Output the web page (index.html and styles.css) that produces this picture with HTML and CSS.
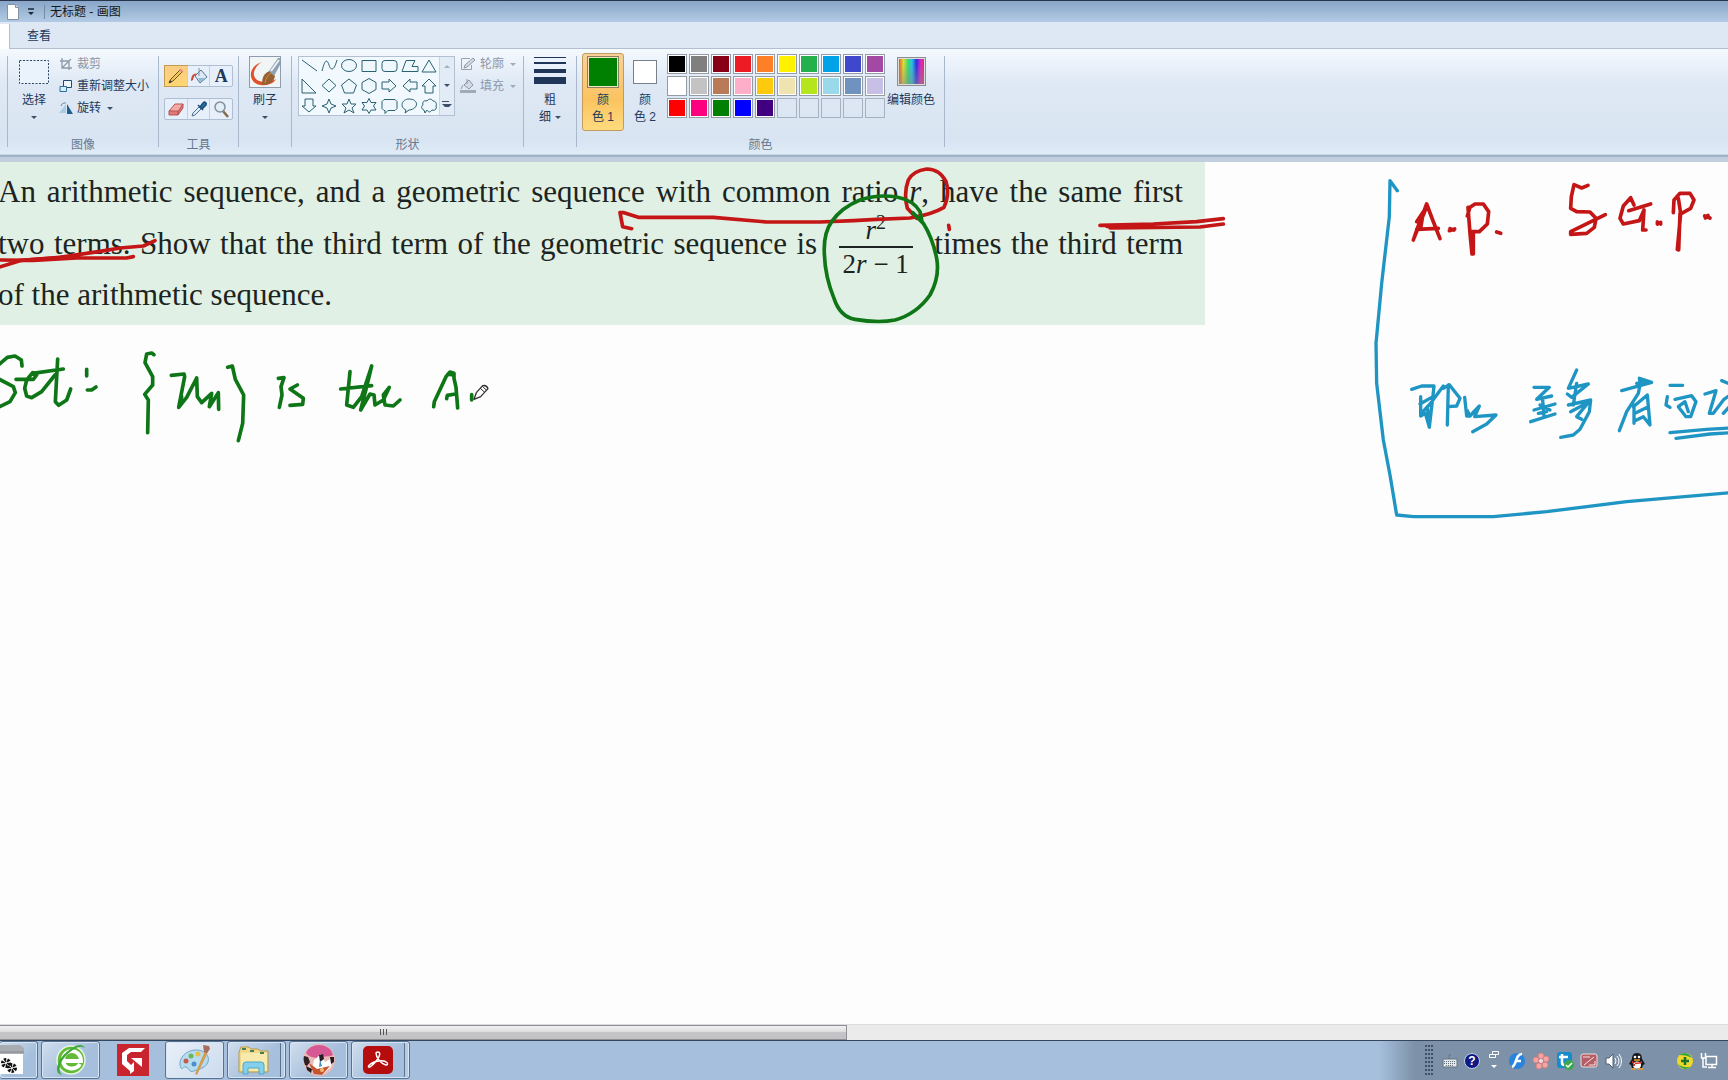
FILE: index.html
```
<!DOCTYPE html>
<html lang="zh-CN">
<head>
  <meta charset="UTF-8" />
  <meta name="viewport" content="width=device-width, initial-scale=1.0"/>
  <title>无标题 - 画图</title>
  <link rel="stylesheet" href="styles.css">
</head>
<body>

<header class="titlebar">
  <svg class="doc" width="12" height="16" viewBox="0 0 12 16"><path d="M.5.5h8l3 3v12H.5z" fill="#fff" stroke="#8492a6"/><path d="M8.500.5v3h3" fill="#dde4ec" stroke="#8492a6"/></svg>
  <svg class="quick" width="8" height="8" viewBox="0 0 8 8"><path d="M1 1h6" stroke="#1c2838" stroke-width="1.500"/><path d="M1 4h6L4 7z" fill="#1c2838"/></svg>
  <h1>无标题 - 画图</h1>
</header>

<nav class="tabs">
  <span class="tab-active"></span>
  <button class="tab">查看</button>
</nav>

<!-- Ribbon -->
<section class="ribbon">
  <div class="group edge"></div>

  <div class="group g-image">
    <div class="row">
      <button class="big">
        <svg width="32" height="32" viewBox="0 0 32 32"><rect x="1.500" y="4.500" width="29" height="23" fill="#eaf2fb" stroke="#2d4668" stroke-dasharray="2 1.500"/></svg>
        <span>选择</span>
        <i class="arrow"></i>
      </button>
      <div class="stack">
        <button class="line off"><svg width="14" height="14" viewBox="0 0 14 14"><path d="M3 1v10h10M1 4h9v9M3 11l9-9" fill="none" stroke="#9099a8" stroke-width="1.300"/></svg>裁剪</button>
        <button class="line"><svg width="14" height="14" viewBox="0 0 14 14"><path d="M4.500 1.500h8v7h-8z" fill="#eef6fd" stroke="#23466b"/><path d="M1 7.500h6.500v5H1z" fill="#d6ecf8" stroke="#2e6f96"/></svg>重新调整大小</button>
        <button class="line"><svg width="14" height="14" viewBox="0 0 14 14"><path d="M7 12V3L0 12z" fill="#a9cbe4"/><path d="M8 3v10h6z" fill="#1f5f8e"/><path d="M2 5c1-3 3-3 5-3" stroke="#4d86b4" fill="none"/></svg>旋转<i class="arrow"></i></button>
      </div>
    </div>
    <h2>图像</h2>
  </div>

  <div class="group g-tools">
    <div class="toolset">
      <button class="tool on" aria-label="铅笔"><svg width="18" height="18" viewBox="0 0 18 18"><path d="M2 16l2-4L13 3l2 2-9 9z" fill="#f3c84e" stroke="#705226"/><path d="M2 16l1-3 2 2z" fill="#333"/><path d="M12 3l3 3 1.500-1.500-3-3z" fill="#e58a7c"/></svg></button>
      <button class="tool" aria-label="填充"><svg width="18" height="18" viewBox="0 0 18 18"><path d="M5 9l6-6 6 7-7 6z" fill="#dceaf5" stroke="#58728c"/><path d="M9 1v8" stroke="#7890a6"/><path d="M1 14c0-6 3-9 7-7-3 0-4 2-5 6z" fill="#d0483c"/><path d="M8 11h8l-6 4z" fill="#8fbcdd"/></svg></button>
      <button class="tool letter" aria-label="文本">A</button>
    </div>
    <div class="toolset">
      <button class="tool" aria-label="橡皮擦"><svg width="18" height="18" viewBox="0 0 18 18"><path d="M2 11l6-7h8l-5 8z" fill="#f4a9a7" stroke="#b55656"/><path d="M2 11h9v4H2zM11 12l5-8v4l-5 7z" fill="#e07a78" stroke="#b55656"/></svg></button>
      <button class="tool" aria-label="取色器"><svg width="18" height="18" viewBox="0 0 18 18"><path d="M2 16l1-3 6-6 2 2-6 6z" fill="#dcebf7" stroke="#54728e"/><path d="M8 5l5 5M10 7l3-4c2-2 4 0 3 2l-4 4z" fill="#2370a8" stroke="#1d4d7a" stroke-width="1.500"/></svg></button>
      <button class="tool" aria-label="放大镜"><svg width="18" height="18" viewBox="0 0 18 18"><path d="M11 11l5 6" stroke="#86684a" stroke-width="2.500"/><circle cx="8" cy="7" r="5" fill="#e2edf7" stroke="#828f9c" stroke-width="1.500"/></svg></button>
    </div>
    <h2>工具</h2>
  </div>

  <div class="group g-brush">
    <button class="big">
      <svg width="32" height="32" viewBox="0 0 32 32"><rect x=".5" y=".5" width="31" height="31" fill="#f2f5f6" stroke="#8e9dad"/><path d="M13 6C3 9-1 18 4 25c4 5 11 5 17 3 3-1 5-3 6-5-5 3-9 4-13 3-7-1-10-5-9-10 1-4 4-8 8-10z" fill="#e0502a"/><path d="M13 29c0-8 2-12 8-14l5 5c-1 6-6 9-13 9z" fill="#96602f"/><path d="M20 15L29 2h2v7l-6 11z" fill="#8ea0b2"/><path d="M22 15l8-11" stroke="#e9eff4" stroke-width="2"/><path d="M16 27c1-5 3-8 6-10" stroke="#c79154" fill="none"/></svg>
      <span>刷子</span>
      <i class="arrow"></i>
    </button>
  </div>

  <div class="group g-shapes">
    <div class="row">
      <div class="gallery">
        <div class="shapes">
          <button aria-label="直线"><svg viewBox="0 0 20 20"><path d="M3 4l15 11"/></svg></button>
          <button aria-label="曲线"><svg viewBox="0 0 20 20"><path d="M3 15C6 3 8 3 10 9s5 6 8-5"/></svg></button>
          <button aria-label="椭圆"><svg viewBox="0 0 20 20"><ellipse cx="10" cy="9.500" rx="7.500" ry="6"/></svg></button>
          <button aria-label="矩形"><svg viewBox="0 0 20 20"><path d="M3 4.500h14v11H3z"/></svg></button>
          <button aria-label="圆角矩形"><svg viewBox="0 0 20 20"><rect x="3" y="4.500" width="15" height="11" rx="3"/></svg></button>
          <button aria-label="多边形"><svg viewBox="0 0 20 20"><path d="M7 4.500h9l-3 6h6v5H3z"/></svg></button>
          <button aria-label="三角形"><svg viewBox="0 0 20 20"><path d="M10 4l7 12H3z"/></svg></button>
          <button aria-label="直角三角形"><svg viewBox="0 0 20 20"><path d="M3 3l14 14H3z"/></svg></button>
          <button aria-label="菱形"><svg viewBox="0 0 20 20"><path d="M10 3l7 6.500-7 6.500-7-6.500z"/></svg></button>
          <button aria-label="五边形"><svg viewBox="0 0 20 20"><path d="M10 3l7.500 6-3 8h-9l-3-8z"/></svg></button>
          <button aria-label="六边形"><svg viewBox="0 0 20 20"><path d="M10 2.500l7 4v7l-7 4-7-4v-7z"/></svg></button>
          <button aria-label="右箭头"><svg viewBox="0 0 20 20"><path d="M3 6h7V3l7 7-7 6v-3H3z"/></svg></button>
          <button aria-label="左箭头"><svg viewBox="0 0 20 20"><path d="M18 6h-7V3l-7 7 7 6v-3h7z"/></svg></button>
          <button aria-label="上箭头"><svg viewBox="0 0 20 20"><path d="M6 17v-7H3l7-7 7 7h-3v7z"/></svg></button>
          <button aria-label="下箭头"><svg viewBox="0 0 20 20"><path d="M6 3v7H3l7 6 7-6h-3V3z"/></svg></button>
          <button aria-label="四角星"><svg viewBox="0 0 20 20"><path d="M10 3l2 5 5 2-5 2-2 5-2-5-5-2 5-2z"/></svg></button>
          <button aria-label="五角星"><svg viewBox="0 0 20 20"><path d="M10 3l2 5h5l-4 4 2 5-5-3-5 3 2-5-4-4h5z"/></svg></button>
          <button aria-label="六角星"><svg viewBox="0 0 20 20"><path d="M10 2.500l2 4h5l-2.500 3.500 2.500 4h-5l-2 3.500L8 14H3l2.500-4L3 6.500h5z"/></svg></button>
          <button aria-label="圆角矩形标注"><svg viewBox="0 0 20 20"><path d="M5 3.500h11l2 2v7l-2 2h-7l-3 3v-3H5l-2-2v-7z"/></svg></button>
          <button aria-label="椭圆形标注"><svg viewBox="0 0 20 20"><path d="M7 14c-7-3-4-11 3-11 10 0 10 10 0 11l-4 3z"/></svg></button>
          <button aria-label="云形标注"><svg viewBox="0 0 20 20"><path d="M5 14c-3-1-3-4-1-5-1-3 1-5 4-4 2-3 5-2 6 0 3 0 4 3 3 5 1 3-1 5-4 4-2 3-4 2-5 0l-2 3z"/></svg></button>
        </div>
        <div class="shape-scroll">
          <button aria-label="上一行"><i class="arrow up"></i></button>
          <button aria-label="下一行"><i class="arrow"></i></button>
          <button class="more" aria-label="其他"><i class="arrow"></i></button>
        </div>
      </div>
      <div class="stack">
        <button class="line off"><svg width="16" height="14" viewBox="0 0 16 14"><path d="M10 1.500H1.500v11h10V8" stroke="#98a2b0" fill="none"/><path d="M4 11l1-3 8-7 2 2-8 7z" fill="#d4dae3" stroke="#8d97a5"/></svg>轮廓<i class="arrow"></i></button>
        <button class="line off"><svg width="16" height="14" viewBox="0 0 16 14"><path d="M4 6l5-5 4 5-4 4z" fill="#d4dae3" stroke="#8d97a5"/><path d="M7 0v5M3 6L1 10" stroke="#8d97a5"/><path d="M0 11h16v3H0z" fill="#9fa9b7"/></svg>填充<i class="arrow"></i></button>
      </div>
    </div>
    <h2>形状</h2>
  </div>

  <div class="group g-size">
    <button class="big">
      <svg width="32" height="32" viewBox="0 0 32 32"><path fill="#1f3658" d="M0 1h32v1H0zM0 6h32v2H0zM0 13h32v4H0zM0 21h32v7H0z"/></svg>
      <span>粗</span>
      <span class="with-arrow">细<i class="arrow"></i></span>
    </button>
  </div>

  <div class="group g-colors">
    <div class="row">
      <button class="big color on"><span class="well green"></span><span>颜</span><span>色 1</span></button>
      <button class="big color"><span class="well small white"></span><span>颜</span><span>色 2</span></button>
      <div class="palette">
        <button class="black" aria-label="黑色"></button>
        <button class="gray" aria-label="灰色"></button>
        <button class="maroon" aria-label="深红色"></button>
        <button class="red" aria-label="红色"></button>
        <button class="orange" aria-label="橙色"></button>
        <button class="yellow" aria-label="黄色"></button>
        <button class="leaf" aria-label="绿色"></button>
        <button class="azure" aria-label="青绿"></button>
        <button class="indigo" aria-label="靛蓝"></button>
        <button class="purple" aria-label="紫色"></button>
        <button class="white" aria-label="白色"></button>
        <button class="silver" aria-label="浅灰"></button>
        <button class="brown" aria-label="褐色"></button>
        <button class="rose" aria-label="玫瑰色"></button>
        <button class="gold" aria-label="金色"></button>
        <button class="cream" aria-label="浅黄色"></button>
        <button class="lime" aria-label="酸橙色"></button>
        <button class="sky" aria-label="淡青绿"></button>
        <button class="steel" aria-label="蓝灰"></button>
        <button class="lavender" aria-label="淡紫色"></button>
        <button class="pure-red" aria-label="自定义 1"></button>
        <button class="pink" aria-label="自定义 2"></button>
        <button class="green" aria-label="自定义 3"></button>
        <button class="blue" aria-label="自定义 4"></button>
        <button class="violet" aria-label="自定义 5"></button>
        <button class="empty" aria-label="自定义 6"></button>
        <button class="empty" aria-label="自定义 7"></button>
        <button class="empty" aria-label="自定义 8"></button>
        <button class="empty" aria-label="自定义 9"></button>
        <button class="empty" aria-label="自定义 10"></button>
      </div>
      <button class="big edit"><span class="rainbow"></span><span>编辑颜色</span></button>
    </div>
    <h2>颜色</h2>
  </div>
</section>

<!-- Drawing area -->
<main class="canvas">
  <div class="problem">
    <p>An arithmetic sequence, and a geometric sequence with common ratio <em>r</em>, have the same first<br>
    two terms. Show that the third term of the geometric sequence is <span class="frac"><span class="num"><em>r</em><sup>2</sup></span><span class="den">2<em>r</em> − 1</span></span> times the third term</p>
    <p class="last">of the arithmetic sequence.</p>
  </div>

  <svg class="ink" width="1728" height="862" viewBox="0 162 1728 862">
    <!-- left notes -->
    <svg x="0" y="150" width="450" height="300" viewBox="0 0 1350 900">
      <g class="red-ink">
        <path d="M-5 330L100 331 230 324 380 324 400 320M-5 352L60 332 180 322 300 304 360 294 430 288 465 272"/>
        <path d="M60 331L140 326 235 318"/>
      </g>
      <g class="green-ink">
        <path d="M66 648L64 630 45 618 22 622-5 645M-5 686L40 710 46 728 30 755-5 772"/>
        <path d="M48 688L100 688 110 675 98 668 80 690 74 715 80 738 95 743 125 725 165 675"/>
        <path d="M98 670L190 657M173 627L166 755 176 766 200 750 212 717M260 658V678M262 720L275 720 288 711"/>
        <path d="M462 614L455 609 440 612 435 638 458 680 458 705 434 733 445 750 443 848"/>
        <path d="M514 676L552 672 554 680 536 772 560 742 590 684 592 740 605 758 635 730 628 770 655 728 656 778M545 740L540 765"/>
        <path d="M683 652L697 648 706 688 731 735 728 820 715 872"/>
        <path d="M835 685L852 683 843 710 846 735 838 772M892 705L870 717 910 745 908 763 870 766"/>
        <path d="M1022 717L1115 707M1050 665L1040 765 1060 772 1085 740 1115 648 1100 710 1082 780 1110 732 1122 735 1125 765 1150 750 1168 712 1150 735 1155 765 1180 768 1200 750"/>
      </g>
    </svg>
    <svg x="420" y="350" width="90" height="80" viewBox="0 0 270 240">
      <path class="green-ink" d="M41 170L43 155 78 80 90 66 102 70 102 85 108 112 113 174M106 132L82 136 80 146M84 72L102 76M155 134V150"/>
      <path d="M162 148L169 128 188 107Q200 104 204 116L182 140Z" fill="#fff" stroke="#333" stroke-width="4"/>
      <path d="M181 115L194 127M187 109L200 121" stroke="#333" stroke-width="3"/>
    </svg>
    <!-- marks on the question -->
    <svg x="440" y="150" width="810" height="190" viewBox="0 0 2430 570">
      <path class="red-ink" d="M575 236L548 230 540 188 552 188 595 202 820 202 980 216 1140 216 1240 212 1310 208 1410 204Q1475 194 1512 172Q1530 130 1518 95Q1500 58 1460 57Q1420 62 1405 90Q1390 130 1402 175L1430 205M1526 226L1528 238M1980 226L2140 222 2270 215 2350 206M2010 234L2280 231 2350 222M2000 229L2140 228"/>
      <path class="green-ink" d="M1446 215L1440 185Q1420 150 1370 141Q1315 132 1260 150Q1205 172 1175 215Q1150 250 1153 310Q1155 380 1182 445Q1200 500 1245 508Q1315 520 1365 510Q1430 492 1470 435Q1500 380 1490 325Q1478 265 1450 220L1418 188"/>
    </svg>
    <!-- right notes -->
    <svg x="1360" y="150" width="368" height="380" viewBox="0 0 1104 1140">
      <path class="blue-ink" d="M112 122L90 92 88 200 65 400 48 580 50 700 70 870 90 975 110 1095 160 1100 400 1100 560 1085 800 1055 1110 1028"/>
      <g class="red-ink">
        <path d="M160 270L172 235 200 162 218 210 240 266M170 238L235 235M170 215L190 185 182 235M163 262L198 175M268 242L284 237M270 236L282 240"/>
        <path d="M324 172L330 250 336 312M322 198L330 172 345 162 370 162 386 185 382 222 358 245 330 245M340 250V312M410 246L422 250"/>
        <path d="M684 106L665 114 642 104 634 140 632 175 650 185 690 186 708 205 703 232 680 250 632 253 632 245 736 194"/>
        <path d="M822 165L812 143 790 168 780 205 790 222 838 212 852 180 848 240 858 240M806 182L872 162M892 216L902 222M892 222L902 217"/>
        <path d="M955 145L962 190 952 298M960 190L956 300M940 188L942 150 960 130 990 130 1002 150 992 175 965 190M1034 198L1050 204M1036 204L1044 196"/>
      </g>
      <g class="blue-ink">
        <path d="M155 718L185 708 222 708 218 745 208 832 196 790 182 798 182 740M180 762L215 742M184 790L210 762 250 708M202 770L208 820M265 705L262 825M250 715L268 704 300 745 290 768 265 770"/>
        <path d="M314 742L320 798 330 798 358 768 344 800 408 795 380 822 338 845M322 782L330 798"/>
        <path d="M522 712H568L530 748 575 738M548 750L552 798M522 780L585 762M512 815L585 792M535 790L560 785M540 765L570 780"/>
        <path d="M650 660L625 715 685 702 635 742 622 732M625 765L692 750 688 785 660 838 640 855 602 862M632 785L685 757 650 800 665 808M650 700L640 765"/>
        <path d="M785 722L875 697 838 685 842 705M842 695L835 730 800 785 778 842M822 765L822 820M820 770L862 735 870 825 850 800 825 812M825 790L865 770M830 700L855 695"/>
        <path d="M930 706H968M922 740L918 765 930 772M945 748L995 737 1008 755 992 800 978 800 955 770 975 755 985 785"/>
        <path d="M1035 732L1068 722 1048 790 1060 790 1092 748 1110 735M1085 692L1110 702M1090 790L1108 770M930 848L1040 838 1110 834M948 865L1050 852 1110 848"/>
      </g>
    </svg>
  </svg>
</main>

<div class="scrollbar"><div class="thumb"><i class="grip"></i></div></div>

<!-- Taskbar -->
<footer class="taskbar">
  <button class="task first" aria-label="设置"><svg width="26" height="34" viewBox="0 0 26 34"><path d="M0 4h23v27H0z" fill="#fff"/><path d="M0 2h20l4 3v6H0z" fill="#a9adb1"/><path d="M0 9h24" stroke="#85898e"/><circle cx="6" cy="20" r="3" fill="#fff" stroke="#111" stroke-width="4" stroke-dasharray="2 1"/><circle cx="12" cy="25" r="3" fill="#fff" stroke="#111" stroke-width="4" stroke-dasharray="2 1"/></svg></button>
  <button class="task" aria-label="浏览器"><svg width="34" height="34" viewBox="0 0 34 34"><circle cx="17" cy="17" r="14" fill="#62ba37" stroke="#e6f4df" stroke-width="1.500"/><path d="M9 18h18c0-13-18-13-18-1 0 10 13 11 17 4" fill="none" stroke="#fff" stroke-width="4"/><path d="M8 32C-2 31 4 13 18 5c6-4 11-4 13 0-5-3-10 0-15 4C6 17 3 27 8 32z" fill="#3da838"/></svg></button>
  <button class="task plain" aria-label="录屏"><svg width="32" height="32" viewBox="0 0 32 32"><path d="M0 0h32v32H0z" fill="#c8252f"/><path d="M28 4H12L5 9v11l8 7v3l4-3V18l-3 3-4-4v-6l4-3h10z" fill="#fff"/><path d="M14 14h11v9z" fill="#fff"/></svg></button>
  <button class="task active" aria-label="画图"><svg width="34" height="34" viewBox="0 0 34 34"><path d="M3 25C-1 17 7 7 18 7c9 0 14 6 12 12s-9 7-14 9-5-3-8-4-3 3-5 1z" fill="#b8dcef" stroke="#70a6c5"/><circle cx="8" cy="18" r="2.500" fill="#c65a4c"/><circle cx="13" cy="13" r="2.500" fill="#6fb65b"/><circle cx="20" cy="11" r="2.500" fill="#e9bd48"/><circle cx="16" cy="21" r="2.500" fill="#4c8dce"/><path d="M17 31L27 8l3 1-11 23z" fill="#d39b4e"/><path d="M26 9l-1-7 6 1 1 3-3 4z" fill="#a76d5d"/></svg></button>
  <button class="task stacked" aria-label="文件夹"><svg width="34" height="34" viewBox="0 0 34 34"><path d="M2 9l2-5h8l2 2h7l2 2h8v21H2z" fill="#f0d989" stroke="#b99a48"/><path d="M4 10h26v18H4z" fill="#f8eaad"/><path d="M5 6h4M13 8h4M23 10h4" stroke="#437c55" stroke-width="2"/><path d="M6 31V22q0-3 3-3h15q3 0 3 3v9h-5v-6H11v6z" fill="#84cfe9" stroke="#4ba8ca"/></svg></button>
  <button class="task" aria-label="头像"><svg width="34" height="34" viewBox="0 0 34 34"><circle cx="17" cy="17" r="16" fill="#eab9b8"/><path d="M4 10C8-1 28-1 31 12c-5 3-10-1-14 5C13 13 8 16 4 10z" fill="#d65894"/><path d="M2 13l4 1 2 5-3 4-2-1c-1-3-2-6-1-9z" fill="#2c2022"/><path d="M12 17l7-6 4 8 7-4-1 9-9 8-10-4z" fill="#fff"/><path d="M17 12l4-1 1 5-4 3zM28 14h4v5l-3 2zM4 23l6 3-1 4-4-3z" fill="#251c24"/><path d="M7 20l8 6 13-3-8 9-8-1z" fill="#c45531"/><path d="M18 17l2 6-3 1z" fill="#3f8ec4"/><circle cx="20" cy="27" r="2" fill="#f1bd75"/></svg></button>
  <button class="task stacked" aria-label="PDF"><svg width="30" height="28" viewBox="0 0 30 28"><rect width="30" height="28" rx="5" fill="#b50d0d"/><path d="M15 6c4 0 1 8-8 15-4 1 0-5 9-6 9-1 10 4 7 4-5-1-10-8-10-12q0-1 2-1z" fill="none" stroke="#fff" stroke-width="1.500"/></svg></button>

  <div class="tray">
    <i class="dots"></i>
    <span class="cell"><svg width="16" height="14" viewBox="0 0 16 14"><path d="M7 5V1h2" stroke="#677789" fill="none"/><path d="M1 5h14v8H1z" fill="#e5e8e9" stroke="#65727f"/><path d="M2 7.500h12M2 9.500h12M4 11.500h8" stroke="#65727f" stroke-dasharray="1 1"/></svg></span>
    <span class="cell help">?</span>
    <span class="cell"><svg width="10" height="20" viewBox="0 0 10 20"><path d="M3.500.5h6v3h-6zM.5 3.500h6v3h-6z" fill="#7d92a9" stroke="#fff"/><path d="M2 14h6l-3 3z" fill="#fff"/></svg></span>
    <span class="cell w"><svg width="18" height="18" viewBox="0 0 18 18"><circle cx="9" cy="9" r="8" fill="#2783dc"/><path d="M14 2c-7 0-5 11-10 13M7 9h6" stroke="#fff" stroke-width="2.500" fill="none"/></svg></span>
    <span class="cell w"><svg width="18" height="18" viewBox="0 0 18 18"><g fill="#f2a6a4" stroke="#d67f80"><circle cx="9" cy="4" r="3"/><circle cx="14" cy="7" r="3"/><circle cx="13" cy="13" r="3"/><circle cx="7" cy="14" r="3"/><circle cx="4" cy="8" r="3"/></g><circle cx="9" cy="9" r="2" fill="#f6dcdc"/></svg></span>
    <span class="cell w"><svg width="18" height="18" viewBox="0 0 18 18"><rect width="15" height="16" x="1" rx="3" fill="#168cce"/><path d="M6 2v9q0 2 3 2M3 5h9" stroke="#fff" stroke-width="2.500" fill="none"/><circle cx="13" cy="13" r="5" fill="#3ba949"/><path d="M10 13l2 2 4-4" stroke="#fff" stroke-width="1.500" fill="none"/></svg></span>
    <span class="cell w"><svg width="18" height="16" viewBox="0 0 18 16"><rect x="1" y="1" width="16" height="13" rx="2" fill="#b65e65" stroke="#f0dddd"/><path d="M4 12l10-8M3 4h7M9 12h6V8" stroke="#f4e4e4" fill="none"/></svg></span>
    <span class="cell w"><svg width="18" height="18" viewBox="0 0 18 18"><path d="M2 6h3l4-4v14l-4-4H2z" fill="#fff" stroke="#50606f"/><path d="M11 6q2 3 0 6M13 4q4 5 0 10M15 2q5 7 0 14" stroke="#fff" fill="none"/></svg></span>
    <span class="cell w"><svg width="18" height="18" viewBox="0 0 18 18"><path d="M9 1c-4 0-5 3-5 6l-3 5 2 1 1 3h10l1-3 2-1-3-5c0-3-1-6-5-6z" fill="#17181b"/><ellipse cx="9" cy="13" rx="4" ry="3.500" fill="#fff"/><path d="M4 9q5 3 10 0v2q-5 2-10 0zM5 10v4h2v-3z" fill="#df342c"/><circle cx="7" cy="5" r="1.300" fill="#fff"/><circle cx="11" cy="5" r="1.300" fill="#fff"/><path d="M6 8h6M3 17h5M10 17h5" stroke="#f19b25" stroke-width="1.500"/></svg></span>
    <span class="cell w"></span>
    <span class="cell w"><svg width="18" height="18" viewBox="0 0 18 18"><circle cx="9" cy="9" r="8" fill="#eed92b"/><path d="M3 3q8-5 13 3-5-3-13-3zM15 15q-8 5-13-3 5 4 13 3z" fill="#36a643"/><path d="M9 5v8M5 9h8" stroke="#17722d" stroke-width="2.500"/></svg></span>
    <span class="cell w"><svg width="18" height="18" viewBox="0 0 18 18"><path d="M6 4.500h10.500v8H6zM8 15.500h8M12 13v2M3 6v9h4M1.500 1v5h4V1" fill="none" stroke="#fff" stroke-width="1.500"/></svg></span>
  </div>
</footer>

</body>
</html>
```

FILE: styles.css
```
* {
  box-sizing: border-box;
}

body {
  margin: 0;
  height: 100vh;
  display: flex;
  flex-direction: column;
  overflow: hidden;
  font-family: "Liberation Sans", "Noto Sans CJK SC", sans-serif;
  font-size: 12px;
  line-height: 16px;
  color: #1e395b;
  background: #fdfdfd;
}

button {
  font: inherit;
  color: inherit;
  padding: 0;
  margin: 0;
  border: 0;
  background: none;
}

h1, h2 {
  margin: 0;
  font-size: 12px;
  font-weight: normal;
}

svg {
  display: block;
  flex: none;
}

/* title bar and tabs */
.titlebar {
  height: 22px;
  display: flex;
  align-items: center;
  padding-left: 7px;
  border-top: 1px solid #27364c;
  background: linear-gradient(#89a6c8, #b2cae4);
}

.titlebar h1 {
  margin-left: 9px;
  padding-left: 5px;
  border-left: 1px solid #7289a5;
  line-height: 14px;
  color: #101820;
}

.quick {
  margin-left: 8px;
}

.tabs {
  height: 27px;
  display: flex;
  background: #dde8f4;
  border-bottom: 1px solid #b3bfce;
}

.tab-active {
  width: 10px;
  margin: 2px 0 -1px;
  background: #fff;
  border-right: 1px solid #b3bfce;
}

.tab {
  padding: 2px 17px 0;
}

/* ribbon */
.ribbon {
  height: 113px;
  flex: none;
  display: flex;
  padding-top: 7px;
  background: linear-gradient(#f4f9fe, #dfe9f5 30%, #d8e4f1 80%, #dfebf7 93%, #9db0c6 94%, #9db0c6 95%, #c1cedd 96%);
}

.group {
  height: 91px;
  display: flex;
  flex-direction: column;
  border-right: 1px solid #a9b8ca;
}

.group h2 {
  margin: auto 0 -7px;
  line-height: 18px;
  text-align: center;
  color: #66788f;
}

.edge { width: 8px; }
.g-image { width: 151px; }
.g-tools { width: 80px; }
.g-brush { width: 53px; align-items: center; }
.g-shapes { width: 232px; }
.g-size { width: 53px; align-items: center; }
.g-colors { width: 368px; }

.row {
  display: flex;
  padding-left: 5px;
}

.big {
  display: flex;
  flex-direction: column;
  align-items: center;
}

.big span {
  line-height: 17px;
}

.big svg {
  margin-bottom: 4px;
}

.arrow {
  display: inline-block;
  border: 3px solid transparent;
  border-top-color: #3d4f68;
  border-bottom: 0;
}

.big > .arrow {
  margin-top: 7px;
}

.with-arrow {
  display: flex;
  align-items: center;
  gap: 4px;
}

.arrow.up {
  border-bottom: 3px solid #a6b1c0;
  border-top: 0;
}

.stack {
  display: flex;
  flex-direction: column;
  gap: 6px;
}

.g-image .row {
  padding-left: 10px;
  gap: 9px;
}

.line {
  height: 16px;
  display: flex;
  align-items: center;
  gap: 4px;
  white-space: nowrap;
}

.line .arrow {
  margin-left: 2px;
}

.off {
  color: #8d98a8;
}

.off .arrow {
  border-top-color: #a1abb9;
}

.toolset {
  display: flex;
  width: 69px;
  height: 22px;
  margin: 9px auto 0;
  border: 1px solid #afbfd3;
  border-radius: 2px;
  background: #e7f0fa;
}

.toolset + .toolset {
  margin-top: 11px;
}

.tool {
  flex: 1;
  display: flex;
  align-items: center;
  justify-content: center;
}

.tool + .tool {
  border-left: 1px solid #c3d0e0;
}

.tool.on {
  background: linear-gradient(#f9cd83, #ffd673);
  outline: 1px solid #c49b54;
}

.letter {
  font-family: "Liberation Serif", serif;
  font-size: 18px;
  font-weight: bold;
}

.gallery {
  height: 60px;
  display: flex;
  border: 1px solid #b2c0d1;
  background: #f1f8fe;
  margin: 0 5px 0 1px;
}

.shapes {
  display: grid;
  grid-template-columns: repeat(7, 20px);
  grid-auto-rows: 20px;
  margin-top: -1px;
}

.shapes svg {
  width: 20px;
  height: 20px;
  fill: #edf7fc;
  stroke: #2c6170;
}

.shapes button:first-child svg,
.shapes button:nth-child(2) svg {
  fill: none;
}

.shape-scroll {
  width: 15px;
  display: flex;
  flex-direction: column;
  border-left: 1px solid #c9d4e2;
  background: #e2ecf7;
}

.shape-scroll button {
  flex: 1;
  display: flex;
  align-items: center;
  justify-content: center;
}

.more .arrow::before {
  content: "";
  display: block;
  width: 7px;
  height: 1px;
  margin: -6px 0 0 -3px;
  background: #3d4f68;
}

/* colors */
.color {
  width: 42px;
  height: 78px;
  margin-top: -3px;
  padding-top: 3px;
}

.color.on {
  border: 1px solid #c29b5d;
  border-radius: 3px;
  padding-top: 2px;
  background: linear-gradient(#f8d29a, #fbc360 60%, #ffdb7e);
}

.well {
  width: 32px;
  height: 32px;
  margin-bottom: 4px;
  border: 1px solid #8a815c;
  box-shadow: inset 0 0 0 1px #f4e6c0;
}

.well.small {
  width: 24px;
  height: 24px;
  margin: 4px 0 8px;
  border-color: #77808b;
  box-shadow: none;
}

.palette {
  display: grid;
  grid-template-columns: repeat(10, 20px);
  grid-auto-rows: 20px;
  gap: 2px;
  margin: -2px 0 0 1px;
}

.palette button {
  border: 1px solid #949ca6;
  box-shadow: inset 0 0 0 1px #fff;
}

.palette .empty {
  box-shadow: none;
  border-color: #a6b2c2;
}

.edit {
  margin-left: 2px;
}

.rainbow {
  width: 29px;
  height: 29px;
  margin: 1px 0 6px;
  border: 1px solid #8e8e8e;
  box-shadow: inset 0 0 0 1px #ddd;
  background:
    linear-gradient(transparent 20%, #8888),
    linear-gradient(90deg, #e23b2b, #dfdf30 20%, #35d67a 38%, #28bfe6 52%, #2e2edb 68%, #d927c7 84%, #e33);
}

.black { background: #000; }
.gray { background: #7f7f7f; }
.maroon { background: #880015; }
.red { background: #ed1c24; }
.orange { background: #ff7f27; }
.yellow { background: #fff200; }
.leaf { background: #22b14c; }
.azure { background: #00a2e8; }
.indigo { background: #3f48cc; }
.purple { background: #a349a4; }
.white { background: #fff; }
.silver { background: #c3c3c3; }
.brown { background: #b97a57; }
.rose { background: #ffaec9; }
.gold { background: #ffc90e; }
.cream { background: #efe4b0; }
.lime { background: #b5e61d; }
.sky { background: #99d9ea; }
.steel { background: #7092be; }
.lavender { background: #c8bfe7; }
.pure-red { background: #ff0000; }
.pink { background: #ff0080; }
.green { background: #008000; }
.blue { background: #0000ff; }
.violet { background: #400080; }

/* canvas */
.canvas {
  flex: 1;
  min-height: 0;
  position: relative;
  overflow: hidden;
  background: #fdfdfd;
}

.problem {
  width: 1205px;
  padding: 4px 22px 0 0;
  height: 163px;
  background: #e1f0e4;
  color: #1c2422;
  font-family: "Liberation Serif", serif;
  font-size: 31px;
  line-height: 52px;
}

.problem p {
  margin: 0 0 0 -2px;
  white-space: nowrap;
  text-align: justify;
  text-align-last: justify;
}

.problem .last {
  line-height: 50px;
  text-align-last: left;
}

.frac {
  display: inline-flex;
  flex-direction: column;
  margin: -20px 12px;
  vertical-align: middle;
  font-size: 27px;
  line-height: 32px;
  text-align: center;
  text-align-last: center;
}

.frac sup {
  font-size: 20px;
  line-height: 10px;
}

.den {
  padding: 0 4px;
  border-top: 2px solid #1c2422;
}

.ink {
  position: absolute;
  top: 0;
  left: 0;
  fill: none;
  stroke-linejoin: round;
  stroke-linecap: round;
}

.red-ink { stroke: #c41616; stroke-width: 11; }
.green-ink { stroke: #0e7616; stroke-width: 11; }
.blue-ink { stroke: #1f95c4; stroke-width: 10; }

.scrollbar {
  height: 16px;
  flex: none;
  background: #ebebec;
  border-top: 1px solid #dcdcdf;
}

.thumb {
  width: 49%;
  height: 15px;
  padding-left: 380px;
  border: 1px solid #8f8f96;
  border-left: 0;
  background: linear-gradient(#f1f1f2, #dededf 45%, #c6c6c8 50%, #c2c2c4);
}

.grip {
  display: block;
  width: 8px;
  height: 6px;
  margin-top: 3px;
  background: repeating-linear-gradient(90deg, #555 0 1px, #fff0 1px 3px);
}

/* taskbar */
.taskbar {
  height: 40px;
  flex: none;
  display: flex;
  gap: 3px;
  border-top: 1px solid #34475f;
  background: #a5bfdc;
}

.task {
  width: 59px;
  height: 38px;
  display: flex;
  align-items: center;
  justify-content: center;
  border: 1px solid #587291;
  border-radius: 3px;
  box-shadow: inset 0 0 0 1px #d7e4f3;
  background: linear-gradient(135deg, #d1deee, #a6bfdc 60%);
}

.task.first {
  width: 38px;
  justify-content: flex-start;
  border-left: 0;
}

.task.plain {
  border: 0;
  box-shadow: none;
  background: none;
}

.task.active {
  background: linear-gradient(135deg, #e9f0f9, #ccdbed);
}

.task.stacked {
  padding-right: 5px;
  box-shadow: inset 0 0 0 1px #d7e4f3, inset -4px 0 0 #b7cbe2, inset -5px 0 0 #587291;
}

.tray {
  display: flex;
  align-items: center;
  margin-left: auto;
  padding: 0 7px 0 46px;
  background: linear-gradient(90deg, #a5bfdc, #7d92a9 36px);
}

.dots {
  width: 8px;
  height: 31px;
  margin-right: 6px;
  background: radial-gradient(circle at 1px 1px, #3e5067 1px, transparent 1px) 0 0 / 3px 4px;
}

.cell {
  width: 22px;
  display: flex;
  justify-content: center;
}

.cell.w {
  width: 24px;
}

.help {
  width: 16px;
  height: 16px;
  margin: 0 3px;
  border: 1px solid #c3cde4;
  border-radius: 50%;
  background: #101884;
  color: #fff;
  font-weight: bold;
  line-height: 14px;
}
```
